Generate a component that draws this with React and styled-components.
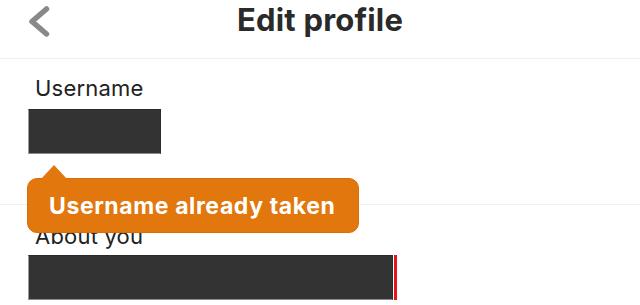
import React from "react";
import styled, { createGlobalStyle } from "styled-components";

const Global = createGlobalStyle`
  html, body { margin: 0; padding: 0; background: #fff; }
  body { font-family: Inter, "Noto Sans", sans-serif; color: #222; }
  * { box-sizing: border-box; }
`;

const Page = styled.div`
  position: relative;
  width: 640px;
  height: 305px;
  overflow: hidden;
  background: #fff;
`;

const Header = styled.header`
  position: relative;
  height: 59px;
  display: flex;
  align-items: center;
  justify-content: center;
  border-bottom: 1px solid #f0f0f0;
`;

const BackButton = styled.button`
  position: absolute;
  left: 24px;
  top: 3px;
  width: 30px;
  height: 36px;
  padding: 0;
  border: 0;
  background: none;
  display: flex;
  align-items: center;
  justify-content: center;
`;

const Title = styled.h1`
  margin: 0 0 20px;
  font-size: 31px;
  font-weight: 700;
  color: #2a2a2a;
  letter-spacing: 0.2px;
`;

const Section = styled.section`
  padding: ${(p) => p.$pad};
  border-bottom: ${(p) => (p.$divider ? "1px solid #f0f0f0" : "none")};
`;

const Label = styled.div`
  font-size: 22px;
  line-height: 26px;
  font-weight: 400;
  color: #222;
  padding-left: 7px;
  letter-spacing: 0.2px;
`;

const FieldRow = styled.div`
  display: flex;
  align-items: stretch;
  margin-top: ${(p) => p.$mt}px;
`;

const Field = styled.div`
  width: ${(p) => p.$w}px;
  height: ${(p) => p.$h}px;
  background: #333;
  border: 1px solid #2b2b2b;
  border-bottom-color: #8c8c8c;
  border-left-color: #9a9a9a;
`;

const Caret = styled.div`
  width: 3px;
  background: #e8141c;
  margin-left: 1px;
`;

const Tooltip = styled.div`
  position: absolute;
  left: 27px;
  top: 178px;
  width: 332px;
  height: 55px;
  border-radius: 10px;
  background: #e1770d;
  border: 1px solid #d86e08;
  display: flex;
  align-items: center;
  padding-left: 21px;
  padding-top: 1px;
  color: #fff;
  font-size: 23px;
  font-weight: 700;
  letter-spacing: 0.6px;

  &::before {
    content: "";
    position: absolute;
    left: 13px;
    top: -14px;
    width: 0;
    height: 0;
    border-left: 13px solid transparent;
    border-right: 13px solid transparent;
    border-bottom: 14px solid #e1770d;
  }
`;

export default function App() {
  return (
    <Page>
      <Global />
      <Header>
        <BackButton aria-label="Back">
          <svg width="24" height="32" viewBox="0 0 24 32">
            <path
              d="M19.5 4 L5 16.5 L19.5 29"
              fill="none"
              stroke="#898989"
              strokeWidth="5.5"
              strokeLinecap="round"
              strokeLinejoin="round"
            />
          </svg>
        </BackButton>
        <Title>Edit profile</Title>
      </Header>
      <Section $pad="16px 0 50px 28px" $divider>
        <Label>Username</Label>
        <FieldRow $mt={8}>
          <Field $w={133} $h={45} />
        </FieldRow>
      </Section>
      <Section $pad="18px 0 0 28px">
        <Label>About you</Label>
        <FieldRow $mt={6}>
          <Field $w={365} $h={45} />
          <Caret />
        </FieldRow>
      </Section>
      <Tooltip>Username already taken</Tooltip>
    </Page>
  );
}
